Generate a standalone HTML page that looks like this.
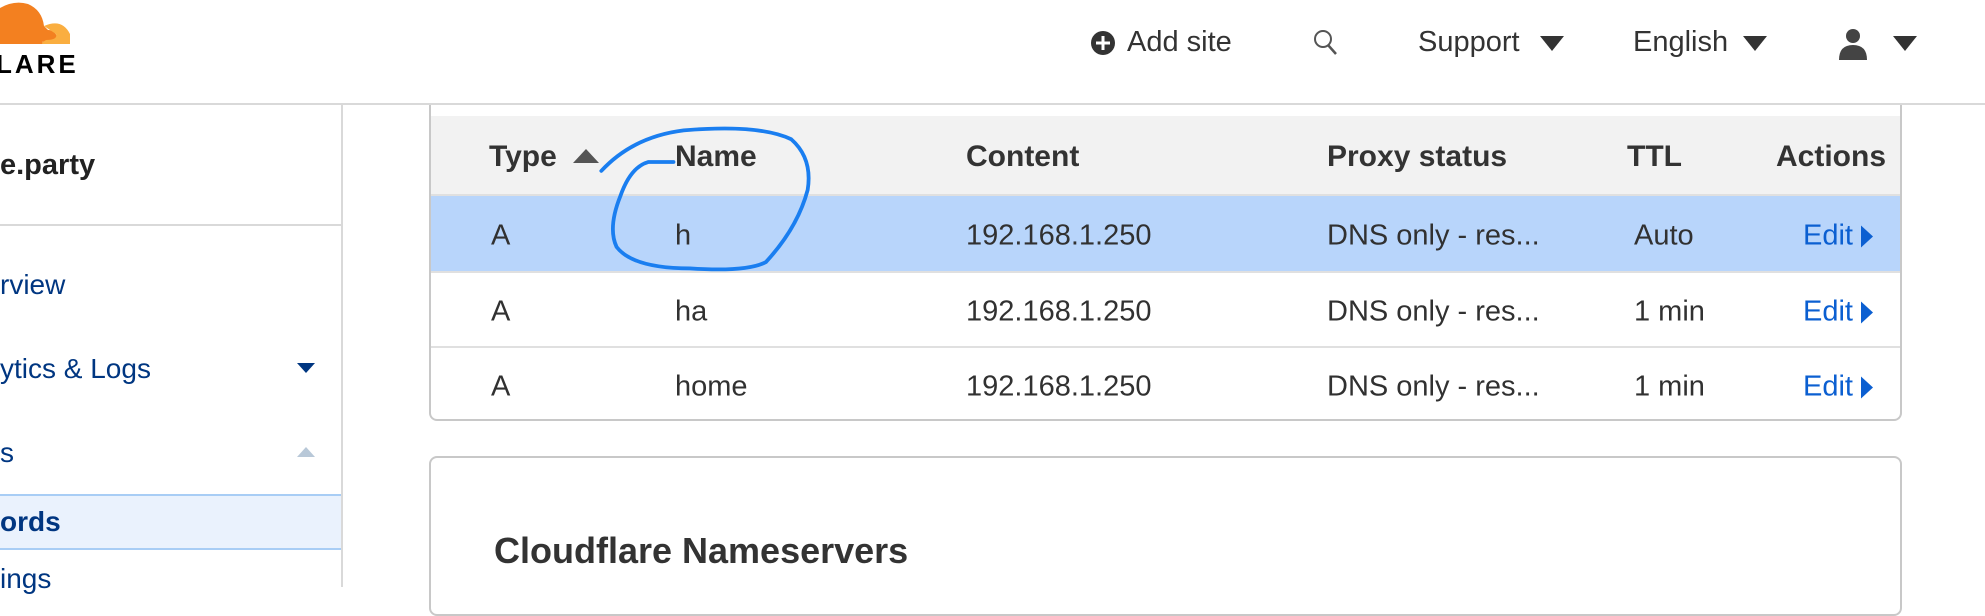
<!DOCTYPE html>
<html><head><meta charset="utf-8"><style>
*{margin:0;padding:0;box-sizing:border-box}
body{width:1985px;height:587px;overflow:hidden;background:#fff;font-family:"Liberation Sans",sans-serif;color:#313131;position:relative}
.a{position:absolute;white-space:nowrap}
.hdr{position:absolute;left:0;top:0;width:1985px;height:105px;border-bottom:2px solid #d9d9d9}
.nav{font-size:29px;color:#333;top:26px}
.side{position:absolute;left:0;top:105px;width:343px;height:482px;border-right:2px solid #d9d9d9}
.sl{font-size:28px;color:#003681}
.card{position:absolute;left:429px;width:1473px;border:2px solid #c8c8c8;border-radius:8px;overflow:hidden}
.row{position:absolute;left:0;width:100%;font-size:29px}
.row .a{top:50%;transform:translateY(-44%)}
.hd{font-weight:bold;font-size:30px;color:#333}
.edit{color:#0b5fd1}
.tri{display:inline-block;width:0;height:0;border-top:11px solid transparent;border-bottom:11px solid transparent;border-left:12px solid #0b5fd1;vertical-align:middle;margin-left:8px}
</style></head><body>
<div class="hdr"></div>
<svg class="a" style="left:0;top:0" width="80" height="60" viewBox="0 0 80 60">
<path d="M0 44 L0 8 Q14 0 28 4 Q42 10 44 26 L48 30 Q56 30 58 40 L44 42 Q38 40 34 44Z" fill="#f38020"/>
<path d="M44 26 Q62 18 70 34 L70 44 L40 44 L46 40 Q58 40 56 34Z" fill="#faae40"/>
<path d="M0 44 L40 38 Q44 40 42 44Z" fill="#f38020"/>
</svg>
<div class="a" style="left:-4px;top:49px;font-size:26px;font-weight:900;letter-spacing:3px;color:#000">LARE</div>
<svg class="a" style="left:1090px;top:30px" width="26" height="26" viewBox="0 0 26 26"><circle cx="13" cy="13" r="12" fill="#333"/><path d="M13 6v14M6 13h14" stroke="#fff" stroke-width="3"/></svg>
<div class="a nav" style="left:1127px">Add site</div>
<svg class="a" style="left:1312px;top:28px" width="28" height="30" viewBox="0 0 28 30"><circle cx="11" cy="11" r="8" fill="none" stroke="#555" stroke-width="2"/><path d="M16 17l8 9" stroke="#555" stroke-width="2.5"/></svg>
<div class="a nav" style="left:1418px">Support</div>
<svg class="a" style="left:1538px;top:34px" width="28" height="20"><path d="M2 2h24L14 17z" fill="#333"/></svg>
<div class="a nav" style="left:1633px">English</div>
<svg class="a" style="left:1741px;top:34px" width="28" height="20"><path d="M2 2h24L14 17z" fill="#333"/></svg>
<svg class="a" style="left:1836px;top:27px" width="34" height="34" viewBox="0 0 34 34"><circle cx="17" cy="9" r="7" fill="#444"/><path d="M3 33 Q3 18 17 18 Q31 18 31 33z" fill="#444"/></svg>
<svg class="a" style="left:1891px;top:34px" width="28" height="20"><path d="M2 2h24L14 17z" fill="#333"/></svg>

<div class="side"></div>
<div class="a" style="left:0;top:149px;font-size:29px;font-weight:bold;color:#222">e.party</div>
<div class="a" style="left:0;top:224px;width:341px;height:2px;background:#d9d9d9"></div>
<div class="a sl" style="left:0;top:269px">rview</div>
<div class="a sl" style="left:0;top:353px">ytics &amp; Logs</div>
<svg class="a" style="left:296px;top:362px" width="20" height="12"><path d="M1 1h18L10 11z" fill="#003681"/></svg>
<div class="a sl" style="left:0;top:437px">s</div>
<svg class="a" style="left:296px;top:446px" width="20" height="12"><path d="M1 11h18L10 1z" fill="#b8c8d8"/></svg>
<div class="a" style="left:0;top:494px;width:341px;height:56px;background:#eaf2fd;border-top:2px solid #a8cdf5;border-bottom:2px solid #a8cdf5"></div>
<div class="a sl" style="left:0;top:506px;font-weight:bold">ords</div>
<div class="a sl" style="left:0;top:563px">ings</div>

<div class="card" style="top:105px;height:316px;border-top:none;border-radius:0 0 8px 8px">
 <div class="row" style="top:11px;height:80px;background:#f2f2f2;border-bottom:2px solid #e0e0e0">
  <div class="a hd" style="left:58px">Type</div>
  <svg class="a" style="left:141px" width="28" height="16"><path d="M1 15h26L14 1z" fill="#555"/></svg>
  <div class="a hd" style="left:244px">Name</div>
  <div class="a hd" style="left:535px">Content</div>
  <div class="a hd" style="left:896px">Proxy status</div>
  <div class="a hd" style="left:1196px">TTL</div>
  <div class="a hd" style="left:1345px">Actions</div>
 </div>
 <div class="row" style="top:91px;height:75px;background:#b8d5fb">
  <div class="a" style="left:60px">A</div><div class="a" style="left:244px">h</div><div class="a" style="left:535px">192.168.1.250</div><div class="a" style="left:896px">DNS only - res...</div><div class="a" style="left:1203px">Auto</div><div class="a edit" style="left:1372px">Edit<span class="tri"></span></div>
 </div>
 <div class="row" style="top:166px;height:75px;border-top:2px solid #e0e0e0">
  <div class="a" style="left:60px">A</div><div class="a" style="left:244px">ha</div><div class="a" style="left:535px">192.168.1.250</div><div class="a" style="left:896px">DNS only - res...</div><div class="a" style="left:1203px">1 min</div><div class="a edit" style="left:1372px">Edit<span class="tri"></span></div>
 </div>
 <div class="row" style="top:241px;height:75px;border-top:2px solid #e0e0e0">
  <div class="a" style="left:60px">A</div><div class="a" style="left:244px">home</div><div class="a" style="left:535px">192.168.1.250</div><div class="a" style="left:896px">DNS only - res...</div><div class="a" style="left:1203px">1 min</div><div class="a edit" style="left:1372px">Edit<span class="tri"></span></div>
 </div>
</div>
<div class="card" style="top:456px;height:160px">
 <div class="a" style="left:63px;top:72px;font-size:36px;font-weight:bold;color:#333">Cloudflare Nameservers</div>
</div>
<svg class="a" style="left:0;top:0" width="1985" height="587" viewBox="0 0 1568 463.7">
<path d="M475 135 Q500 108 540 103 Q600 98 625 110 Q642 125 638 150 Q630 180 605 207 Q590 215 545 212 Q500 212 487 195 Q480 180 490 155 Q498 132 512 128 L532 128" fill="none" stroke="#1a7ef0" stroke-width="3" stroke-linecap="round"/>
</svg>
</body></html>
